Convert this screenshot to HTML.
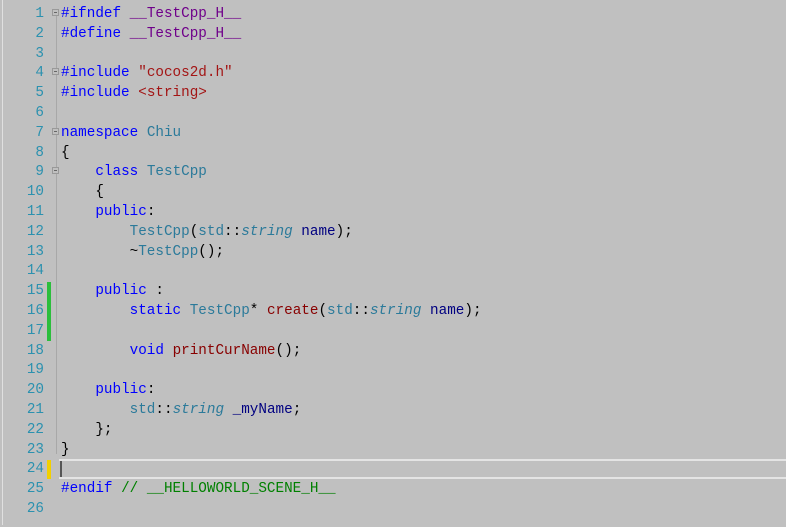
<html><head><style>
body{margin:0;width:786px;height:525px;background:#c0c0c0;overflow:hidden;font-family:"Liberation Mono",monospace;font-size:14.3px;position:relative}
#w{position:absolute;left:0;top:2px;width:786px;height:525px}
.l{position:absolute;left:0;height:20px;line-height:20px;white-space:pre;width:786px}
.n{position:absolute;right:742px;color:#2b91af;text-align:right}
.c{position:absolute;left:61px;color:#000}
.k{color:#0000ff}.p{color:#6f008a}.s{color:#a31515}.t{color:#2b7a9a}.f{color:#880000}.i{font-style:italic;color:#2b7a9a}.g{color:#008000}.v{color:#000080}
#edge{position:absolute;left:2px;top:0;width:1px;height:525px;background:#e0e0e0}
#fold{position:absolute;left:56px;top:14px;width:1px;height:440px;background:#a8a8a8}
.m{position:absolute;left:52px;width:7px;height:7px;border:1px solid #999;box-sizing:border-box;background:#c0c0c0}
.m::after{content:"";position:absolute;left:1px;top:2px;width:3px;height:1px;background:#666}
</style></head><body>
<div id="edge"></div>
<div id="fold"></div>
<div style="position:absolute;left:47px;top:282px;width:4px;height:59px;background:#2cbe3c"></div>
<div style="position:absolute;left:47px;top:460px;width:4px;height:19px;background:#f2d000"></div>
<div style="position:absolute;left:59px;top:459px;width:727px;height:20px;border-top:2px solid #e4e4e4;border-bottom:2px solid #e4e4e4;box-sizing:border-box"></div>
<div style="position:absolute;left:60px;top:461px;width:2px;height:16px;background:#555"></div>
<div class="m" style="top:9px"></div><div class="m" style="top:68px"></div><div class="m" style="top:128px"></div><div class="m" style="top:167px"></div>
<div id="w">
<div class="l" style="top:2px"><span class="n">1</span><span class="c"><span class="k">#ifndef</span> <span class="p">__TestCpp_H__</span></span></div>
<div class="l" style="top:21.8px"><span class="n">2</span><span class="c"><span class="k">#define</span> <span class="p">__TestCpp_H__</span></span></div>
<div class="l" style="top:41.6px"><span class="n">3</span></div>
<div class="l" style="top:61.4px"><span class="n">4</span><span class="c"><span class="k">#include</span> <span class="s">"cocos2d.h"</span></span></div>
<div class="l" style="top:81.2px"><span class="n">5</span><span class="c"><span class="k">#include</span> <span class="s">&lt;string&gt;</span></span></div>
<div class="l" style="top:101px"><span class="n">6</span></div>
<div class="l" style="top:120.8px"><span class="n">7</span><span class="c"><span class="k">namespace</span> <span class="t">Chiu</span></span></div>
<div class="l" style="top:140.6px"><span class="n">8</span><span class="c">{</span></div>
<div class="l" style="top:160.4px"><span class="n">9</span><span class="c">    <span class="k">class</span> <span class="t">TestCpp</span></span></div>
<div class="l" style="top:180.2px"><span class="n">10</span><span class="c">    {</span></div>
<div class="l" style="top:200px"><span class="n">11</span><span class="c">    <span class="k">public</span>:</span></div>
<div class="l" style="top:219.8px"><span class="n">12</span><span class="c">        <span class="t">TestCpp</span>(<span class="t">std</span>::<span class="i">string</span> <span class="v">name</span>);</span></div>
<div class="l" style="top:239.6px"><span class="n">13</span><span class="c">        ~<span class="t">TestCpp</span>();</span></div>
<div class="l" style="top:259.4px"><span class="n">14</span></div>
<div class="l" style="top:279.2px"><span class="n">15</span><span class="c">    <span class="k">public</span> :</span></div>
<div class="l" style="top:299px"><span class="n">16</span><span class="c">        <span class="k">static</span> <span class="t">TestCpp</span>* <span class="f">create</span>(<span class="t">std</span>::<span class="i">string</span> <span class="v">name</span>);</span></div>
<div class="l" style="top:318.8px"><span class="n">17</span></div>
<div class="l" style="top:338.6px"><span class="n">18</span><span class="c">        <span class="k">void</span> <span class="f">printCurName</span>();</span></div>
<div class="l" style="top:358.4px"><span class="n">19</span></div>
<div class="l" style="top:378.2px"><span class="n">20</span><span class="c">    <span class="k">public</span>:</span></div>
<div class="l" style="top:398px"><span class="n">21</span><span class="c">        <span class="t">std</span>::<span class="i">string</span> <span class="v">_myName</span>;</span></div>
<div class="l" style="top:417.8px"><span class="n">22</span><span class="c">    };</span></div>
<div class="l" style="top:437.6px"><span class="n">23</span><span class="c">}</span></div>
<div class="l" style="top:457.4px"><span class="n">24</span></div>
<div class="l" style="top:477.2px"><span class="n">25</span><span class="c"><span class="k">#endif</span> <span class="g">// __HELLOWORLD_SCENE_H__</span></span></div>
<div class="l" style="top:497px"><span class="n">26</span></div>
</div>
</body></html>
